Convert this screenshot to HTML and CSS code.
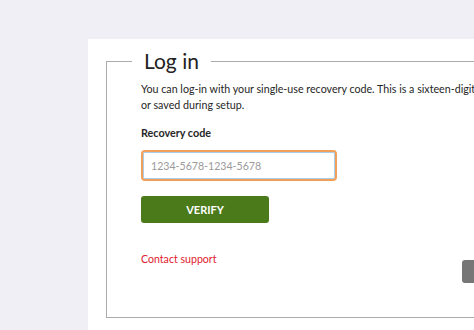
FILE: index.html
```html
<!DOCTYPE html>
<html lang="en">
<head>
  <meta charset="UTF-8">
  <meta name="viewport" content="width=device-width, initial-scale=1.0">
  <title>Log in</title>
  <link rel="stylesheet" href="styles.css">
</head>
<body>
  <!-- Recovery login card -->
  <main class="login">
    <form class="login__card">
      <fieldset class="login__box">
        <legend class="login__title">Log in</legend>
        <p class="login__intro">You can log-in with your single-use recovery code. This is a sixteen-digit code you printed<br>or saved during setup.</p>
        <label class="login__label" for="code">Recovery code</label>
        <input class="login__input" id="code" type="text" placeholder="1234-5678-1234-5678">
        <button class="login__verify" type="button">VERIFY</button>
        <div class="login__footer">
          <a class="login__support" href="#">Contact support</a>
          <button class="login__back" type="button">Back</button>
        </div>
      </fieldset>
    </form>
  </main>
</body>
</html>
```
FILE: styles.css
```css
:root {
  --page-bg: #efeff5;
  --border: #a9abae;
  --text: #262626;
  --green: #4b7a1b;
  --red: #e0202d;
  --orange: #f0a05a;
}
* { box-sizing: border-box; }
html, body { margin: 0; overflow: hidden; }
body {
  background: var(--page-bg);
  font-family: Lato, "Open Sans", sans-serif;
  color: var(--text);
  height: 330px;
}
.login {
  padding: 39px 0 0 88px;
}
.login__card {
  background: #fff;
  width: 620px;
  height: 300px;
  padding: 10px 0 0 18px;
}
.login__box {
  margin: 0;
  width: 580px;
  height: 269px;
  border: 1px solid var(--border);
  padding: 0 0 0 34px;
}
.login__title {
  font-size: 21px;
  line-height: 24px;
  padding: 0 12px;
  margin-left: -9px;
  color: #222;
}
.login__intro {
  font-size: 10.7px;
  line-height: 16px;
  margin: 8px 0 12px;
  white-space: nowrap;
}
.login__label {
  display: block;
  font-size: 10.8px;
  font-weight: bold;
  line-height: 16px;
}
.login__input {
  display: block;
  margin-top: 9px;
  width: 196px;
  height: 31px;
  border: 2px solid var(--orange);
  border-radius: 4px;
  box-shadow: inset 0 0 0 1px #a8cdea;
  padding: 0 8px;
  font: 10.6px Lato, "Open Sans", sans-serif;
  outline: none;
}
.login__input::placeholder { color: #9a9a9a; }
.login__verify {
  display: block;
  margin-top: 15px;
  width: 128px;
  height: 27px;
  border: none;
  border-radius: 3px;
  background: var(--green);
  color: #fff;
  font: bold 11px Lato, "Open Sans", sans-serif;
}
.login__footer {
  display: flex;
  justify-content: space-between;
  align-items: flex-start;
  width: 400px;
  margin-top: 28px;
}
.login__support {
  color: var(--red);
  font-size: 10.6px;
  line-height: 16px;
  text-decoration: none;
}
.login__back {
  margin-top: 9px;
  width: 79px;
  height: 23px;
  border: none;
  border-radius: 3px;
  background: #767676;
  color: #fff;
  font: bold 11px Lato, "Open Sans", sans-serif;
}
```
